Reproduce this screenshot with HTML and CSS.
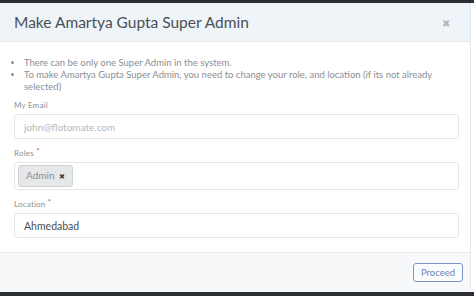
FILE: index.html
```html
<!DOCTYPE html>
<html>
<head>
<meta charset="utf-8">
<link rel="stylesheet" href="styles.css">
</head>
<body>
<div class="topbar"></div>
<div class="modal">
  <div class="header">
    <div class="title">Make Amartya Gupta Super Admin</div>
    <div class="close">&#10006;</div>
  </div>
  <div class="body">
    <ul class="notes">
      <li>There can be only one Super Admin in the system.</li>
      <li>To make Amartya Gupta Super Admin, you need to change your role, and location (if its not already selected)</li>
    </ul>
    <div class="field">
      <div class="label">My Email</div>
      <div class="input placeholder">john@flotomate.com</div>
    </div>
    <div class="field">
      <div class="label">Roles <span class="req">*</span></div>
      <div class="input tags"><span class="tag">Admin <span class="x">&#10006;</span></span></div>
    </div>
    <div class="field">
      <div class="label">Location <span class="req">*</span></div>
      <div class="input value">Ahmedabad</div>
    </div>
  </div>
  <div class="footer">
    <button class="btn">Proceed</button>
  </div>
</div>
<div class="bottombar"></div>
</body>
</html>
```
FILE: styles.css
```css
html, body {
  margin: 0;
  padding: 0;
  width: 474px;
  height: 296px;
  overflow: hidden;
  background: #fff;
  font-family: Lato, "Open Sans", sans-serif;
}
.topbar {
  height: 3px;
  background: #2b2f33;
}
.bottombar {
  height: 4px;
  background: #2b2f33;
}
.modal {
  height: 289px;
  display: flex;
  flex-direction: column;
  margin-right: 3px;
  border-right: 1px solid #e6eaee;
}
.header {
  height: 38px;
  background: #eff4f8;
  border-bottom: 1px solid #e3e8ec;
  display: flex;
  align-items: center;
  justify-content: space-between;
  padding: 0 20px 0 14px;
}
.title {
  font-size: 15.5px;
  color: #4a4f55;
}
.close {
  font-size: 10px;
  color: #b4b8bc;
  margin-top: 2px;
}
.body {
  flex: 1;
  padding: 15px 11px 0 14px;
}
.notes {
  margin: 0 0 7px 0;
  padding: 0 8px 0 10px;
  font-size: 9.5px;
  line-height: 12px;
  color: #8a8f95;
}
.field {
  margin-bottom: 7px;
}
.label {
  font-size: 8px;
  color: #8a8f95;
  line-height: 10px;
  margin-bottom: 4px;
  letter-spacing: 0.2px;
}
.req {
  color: #d9534f;
  font-size: 8px;
  vertical-align: 2px;
}
.input {
  height: 23px;
  border: 1px solid #e4e7ea;
  border-radius: 3px;
  display: flex;
  align-items: center;
  padding: 0 9px;
  font-size: 10px;
}
.placeholder {
  color: #b3b7bb;
}
.value {
  color: #4a4f55;
  font-size: 10.5px;
}
.tags {
  height: 26px;
  padding: 0 3px;
}
.tag {
  background: #e6e7e8;
  border: 1px solid #cfd2d5;
  border-radius: 3px;
  color: #8a8f95;
  font-size: 10px;
  padding: 4px 7px 4px 7px;
  line-height: 11px;
}
.tag .x {
  color: #3a3d40;
  font-size: 7px;
  margin-left: 2px;
}
.footer {
  height: 39px;
  background: #f6f8fa;
  border-top: 1px solid #e8ebee;
  display: flex;
  align-items: center;
  justify-content: flex-end;
  padding: 0 7px;
}
.btn {
  font-family: Lato, sans-serif;
  font-size: 9.5px;
  color: #6d86b8;
  background: #fbfcfe;
  border: 1px solid #7d95c4;
  border-radius: 3px;
  height: 19px;
  padding: 0 7px;
}
```
